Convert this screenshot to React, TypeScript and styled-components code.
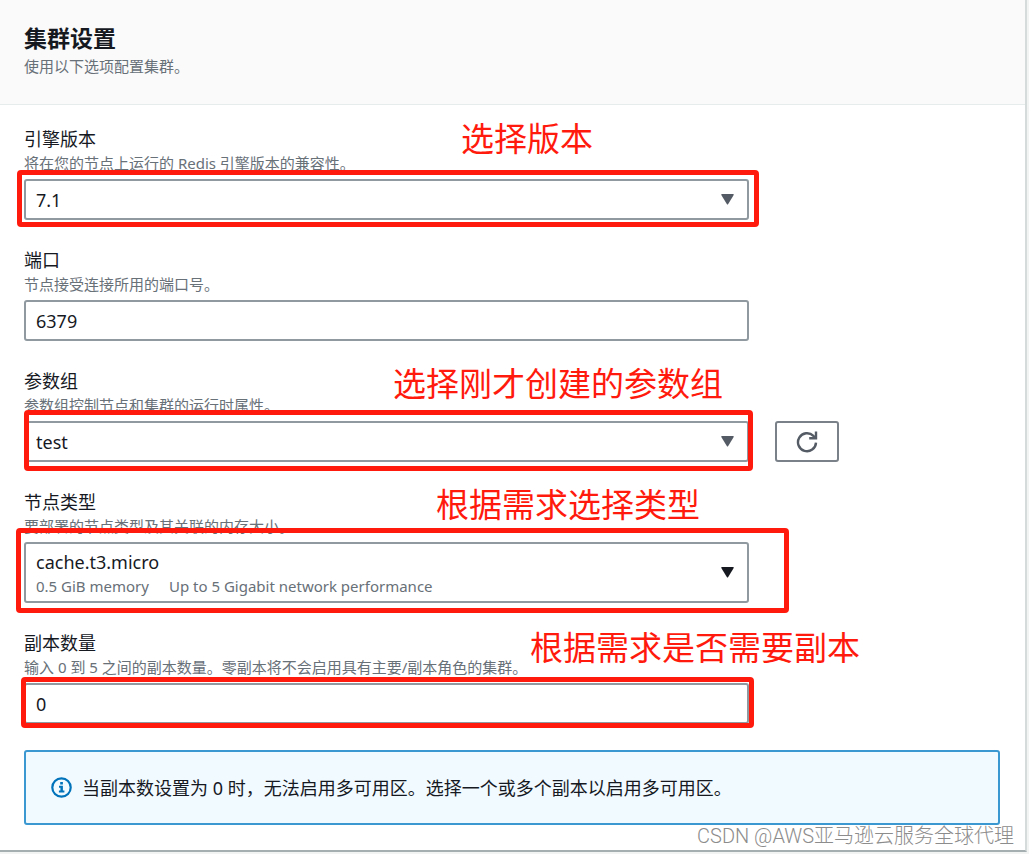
import React, { useState } from "react";
import styled, { createGlobalStyle } from "styled-components";

const GlobalStyle = createGlobalStyle`
  *, *::before, *::after { box-sizing: border-box; }
  body {
    margin: 0;
    background: #f2f3f3;
    color: #16191f;
    font-family: "Noto Sans", "Noto Sans CJK SC", sans-serif;
    font-size: 18px;
    line-height: 24px;
  }
`;

const Page = styled.div`
  position: relative;
  min-height: 100vh;
  padding: 0 2px 2px 0;
`;

const Panel = styled.section`
  background: #fff;
  border-right: 2px solid #d5dbdb;
  border-bottom: 2px solid #a5aeb0;
`;

const PanelHeader = styled.header`
  padding: 22px 24px 26px;
  background: #fafafa;
  border-bottom: 1px solid #e6ebeb;
`;

const Title = styled.h2`
  margin: 0;
  font-size: 23px;
  line-height: 32px;
  font-weight: 700;
`;

const Hint = styled.p`
  margin: 0;
  color: #687078;
  font-size: 15px;
  line-height: 24px;
`;

const PanelBody = styled.div`
  display: flex;
  flex-direction: column;
  gap: 28px;
  padding: 22px 25px 25px 24px;
`;

const Field = styled.div`
  position: relative;
`;

const Label = styled.label`
  display: block;
  font-size: 18px;
  line-height: 24px;
`;

const ControlRow = styled.div`
  display: flex;
  align-items: center;
  gap: 26px;
  margin-top: 4px;
`;

const ControlSlot = styled.div`
  position: relative;
  flex: 0 1 725px;
  min-width: 0;
`;

const ControlBox = styled.div`
  display: grid;
  grid-template-columns: minmax(0, 1fr);
  align-items: center;
  border: 2px solid #8f999f;
  border-radius: 3px;
  background: #fff;
`;

const TextInput = styled.input`
  display: block;
  width: 100%;
  height: 41px;
  padding: 0 10px;
  border: 2px solid #8f999f;
  border-radius: 3px;
  background: #fff;
  color: #16191f;
  font: inherit;
  outline-offset: 2px;
`;

const Select = styled.select<{ $tall?: boolean }>`
  grid-area: 1 / 1;
  appearance: none;
  width: 100%;
  height: ${(p) => (p.$tall ? 57 : 37)}px;
  padding: ${(p) => (p.$tall ? "6px 40px 27px 10px" : "0 40px 0 10px")};
  border: 0;
  background: transparent;
  color: #16191f;
  font: inherit;
`;

const Details = styled.p`
  grid-area: 1 / 1;
  align-self: end;
  display: flex;
  gap: 20px;
  margin: 0;
  padding: 0 40px 3px 10px;
  color: #687078;
  font-size: 15px;
  line-height: 24px;
  pointer-events: none;
`;

const Caret = styled.svg<{ $dark?: boolean }>`
  grid-area: 1 / 1;
  justify-self: end;
  width: 13px;
  height: 11px;
  margin-right: 13px;
  fill: ${(p) => (p.$dark ? "#16191f" : "#545b64")};
  pointer-events: none;
`;

const IconButton = styled.button`
  display: flex;
  flex: none;
  align-items: center;
  justify-content: center;
  width: 64px;
  height: 41px;
  padding: 0;
  border: 2px solid #7a8188;
  border-radius: 3px;
  background: #fff;
  color: #545b64;
`;

const Highlight = styled.span<{ $inset: string }>`
  position: absolute;
  inset: ${(p) => p.$inset};
  border: 5px solid #ff1a0d;
  border-radius: 4px;
  pointer-events: none;
`;

const Note = styled.span<{ $left: number; $top: number }>`
  position: absolute;
  z-index: 1;
  left: ${(p) => p.$left}px;
  top: ${(p) => p.$top}px;
  color: #ff1a0d;
  font-size: 33px;
  line-height: 40px;
  white-space: nowrap;
  pointer-events: none;
`;

const Alert = styled.div`
  display: flex;
  align-items: center;
  gap: 10px;
  min-height: 75px;
  margin-top: -2px;
  padding: 0 25px;
  border: 2px solid #3b98d0;
  border-radius: 3px;
  background: #f1faff;
`;

const Watermark = styled.span`
  position: absolute;
  right: 15px;
  bottom: 4px;
  color: #8c8c8c;
  font-family: Roboto, "Noto Sans CJK SC", sans-serif;
  font-size: 20px;
  font-weight: 300;
  line-height: 28px;
  text-shadow: 1px 1px 0 #fff;
  white-space: nowrap;
`;

function CaretIcon({ dark }: { dark?: boolean }) {
  return (
    <Caret $dark={dark} viewBox="0 0 13 11" aria-hidden="true">
      <path d="M1 0h11q1.3 0 .7 1L7.2 10q-.7 1-1.4 0L.3 1Q-.3 0 1 0z" />
    </Caret>
  );
}

function RefreshIcon() {
  return (
    <svg width="22" height="22" viewBox="0 0 22 22" fill="none" stroke="currentColor" strokeWidth="2.4" aria-hidden="true">
      <path d="M20 11.6A9 9 0 1 1 17.4 4.9L19.4 6.6" />
      <path d="M20 .6V7.2H13.2" />
    </svg>
  );
}

function InfoIcon() {
  return (
    <svg width="21" height="21" viewBox="0 0 21 21" fill="none" aria-hidden="true">
      <circle cx="10.5" cy="10.5" r="9.2" stroke="#0073bb" strokeWidth="2.2" />
      <path d="M9.2 5h2.7v2.4H9.2zM8 8.7h3.9v4.7h1.5v2.2H7.9v-2.2h1.5v-2.6H8z" fill="#0073bb" />
    </svg>
  );
}

export default function App() {
  const [port, setPort] = useState("6379");
  const [replicas, setReplicas] = useState("0");

  return (
    <>
      <GlobalStyle />
      <Page lang="zh-CN">
        <Panel>
          <PanelHeader>
            <Title>集群设置</Title>
            <Hint>使用以下选项配置集群。</Hint>
          </PanelHeader>
          <PanelBody>
            <Field>
              <Label htmlFor="engine">引擎版本</Label>
              <Hint>将在您的节点上运行的 Redis 引擎版本的兼容性。</Hint>
              <ControlRow>
                <ControlSlot>
                  <ControlBox>
                    <Select id="engine">
                      <option>7.1</option>
                    </Select>
                    <CaretIcon />
                  </ControlBox>
                  <Highlight $inset="-9px -10px -7px -7px" />
                </ControlSlot>
              </ControlRow>
              <Note $left={437} $top={-8}>选择版本</Note>
            </Field>

            <Field>
              <Label htmlFor="port">端口</Label>
              <Hint>节点接受连接所用的端口号。</Hint>
              <ControlRow>
                <ControlSlot>
                  <TextInput id="port" value={port} onChange={(e) => setPort(e.target.value)} />
                </ControlSlot>
              </ControlRow>
            </Field>

            <Field>
              <Label htmlFor="params">参数组</Label>
              <Hint>参数组控制节点和集群的运行时属性。</Hint>
              <ControlRow>
                <ControlSlot>
                  <ControlBox>
                    <Select id="params">
                      <option>test</option>
                    </Select>
                    <CaretIcon />
                  </ControlBox>
                  <Highlight $inset="-11px -4px -9px 0" />
                </ControlSlot>
                <IconButton type="button" aria-label="刷新">
                  <RefreshIcon />
                </IconButton>
              </ControlRow>
              <Note $left={369} $top={-5}>选择刚才创建的参数组</Note>
            </Field>

            <Field>
              <Label htmlFor="node">节点类型</Label>
              <Hint>要部署的节点类型及其关联的内存大小。</Hint>
              <ControlRow>
                <ControlSlot>
                  <ControlBox>
                    <Select id="node" $tall aria-describedby="node-details">
                      <option>cache.t3.micro</option>
                    </Select>
                    <Details id="node-details">
                      <span>0.5 GiB memory</span>
                      <span>Up to 5 Gigabit network performance</span>
                    </Details>
                    <CaretIcon dark />
                  </ControlBox>
                  <Highlight $inset="-14px -40px -10px -8px" />
                </ControlSlot>
              </ControlRow>
              <Note $left={412} $top={-5}>根据需求选择类型</Note>
            </Field>

            <Field>
              <Label htmlFor="replicas">副本数量</Label>
              <Hint>输入 0 到 5 之间的副本数量。零副本将不会启用具有主要/副本角色的集群。</Hint>
              <ControlRow>
                <ControlSlot>
                  <TextInput id="replicas" value={replicas} onChange={(e) => setReplicas(e.target.value)} />
                  <Highlight $inset="-6px -5px -4px -3px" />
                </ControlSlot>
              </ControlRow>
              <Note $left={506} $top={-3}>根据需求是否需要副本</Note>
            </Field>

            <Alert role="status">
              <InfoIcon />
              <span>当副本数设置为 0 时，无法启用多可用区。选择一个或多个副本以启用多可用区。</span>
            </Alert>
          </PanelBody>
        </Panel>
        <Watermark>CSDN @AWS亚马逊云服务全球代理</Watermark>
      </Page>
    </>
  );
}
